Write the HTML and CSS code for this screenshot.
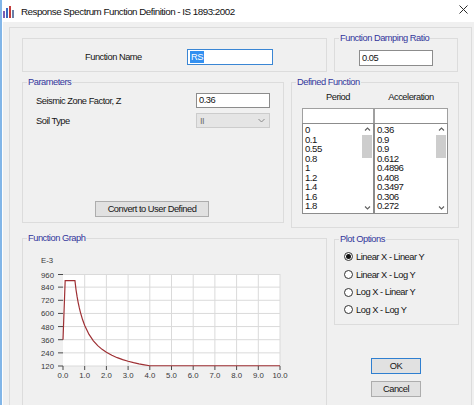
FILE: index.html
```html
<!DOCTYPE html>
<html>
<head>
<meta charset="utf-8">
<link rel="stylesheet" href="styles.css">
</head>
<body>
<div class="window">
  <div class="titlebar">
    <svg class="appicon" width="12" height="12" viewBox="0 0 12 12">
      <rect x="0" y="5" width="2" height="7" fill="#7b5db3"/>
      <rect x="3" y="2" width="2" height="10" fill="#3b68c0"/>
      <rect x="6" y="0" width="2" height="12" fill="#c23b3b"/>
      <rect x="9" y="4" width="2" height="8" fill="#6b7fa8"/>
    </svg>
    <span class="title">Response Spectrum Function Definition - IS 1893:2002</span>
    <svg class="close" width="9" height="9" viewBox="0 0 9 9">
      <path d="M0.5 0.5L8.5 8.5M8.5 0.5L0.5 8.5" stroke="#2b2b2b" stroke-width="1" fill="none"/>
    </svg>
  </div>
  <div class="client">
    <div class="frame">
      <div class="row row1">
        <div class="group g-name">
          <span class="name-label">Function Name</span>
          <div class="edit focus name-edit"><span class="sel">RS</span></div>
        </div>
        <div class="group g-damp">
          <span class="legend">Function Damping Ratio</span>
          <div class="edit damp-edit">0.05</div>
        </div>
      </div>
      <div class="row row2">
        <div class="group g-params">
          <span class="legend">Parameters</span>
          <div class="prow">
            <span class="plabel">Seismic Zone Factor, Z</span>
            <div class="edit pedit">0.36</div>
          </div>
          <div class="prow prow2">
            <span class="plabel">Soil Type</span>
            <div class="combo"><span>II</span>
              <svg width="7" height="5" viewBox="0 0 7 5"><path d="M0.5 1L3.5 4L6.5 1" stroke="#8a8a8a" fill="none"/></svg>
            </div>
          </div>
          <div class="btn convert">Convert to User Defined</div>
        </div>
        <div class="group g-def">
          <span class="legend">Defined Function</span>
          <div class="cols">
            <div class="col col1">
              <div class="colhead">Period</div>
              <div class="edit coledit"></div>
              <div class="list">
                <div class="items">
                  <div>0</div><div>0.1</div><div>0.55</div><div>0.8</div><div>1</div><div>1.2</div><div>1.4</div><div>1.6</div><div>1.8</div>
                </div>
                <div class="vscroll">
                  <svg class="arrow" width="11" height="11" viewBox="0 0 11 11"><path d="M3 6.5L5.5 4L8 6.5" stroke="#606060" stroke-width="1.1" fill="none"/></svg>
                  <div class="thumb"></div>
                  <svg class="arrow down" width="11" height="11" viewBox="0 0 11 11"><path d="M3 4.5L5.5 7L8 4.5" stroke="#606060" stroke-width="1.1" fill="none"/></svg>
                </div>
              </div>
            </div>
            <div class="col col2">
              <div class="colhead">Acceleration</div>
              <div class="edit coledit"></div>
              <div class="list">
                <div class="items">
                  <div>0.36</div><div>0.9</div><div>0.9</div><div>0.612</div><div>0.4896</div><div>0.408</div><div>0.3497</div><div>0.306</div><div>0.272</div>
                </div>
                <div class="vscroll">
                  <svg class="arrow" width="11" height="11" viewBox="0 0 11 11"><path d="M3 6.5L5.5 4L8 6.5" stroke="#606060" stroke-width="1.1" fill="none"/></svg>
                  <div class="thumb"></div>
                  <svg class="arrow down" width="11" height="11" viewBox="0 0 11 11"><path d="M3 4.5L5.5 7L8 4.5" stroke="#606060" stroke-width="1.1" fill="none"/></svg>
                </div>
              </div>
            </div>
          </div>
        </div>
      </div>
      <div class="row row3">
        <div class="group g-graph">
          <span class="legend">Function Graph</span>
          <svg class="graph" width="303" height="170" viewBox="0 0 303 170">
            <g transform="translate(-1,-1)">
              <rect x="41" y="36" width="217" height="92" fill="#ffffff"/>
              <g stroke="#dadada" stroke-width="1">
                <line x1="62.7" y1="36" x2="62.7" y2="128"/>
                <line x1="84.4" y1="36" x2="84.4" y2="128"/>
                <line x1="106.1" y1="36" x2="106.1" y2="128"/>
                <line x1="127.8" y1="36" x2="127.8" y2="128"/>
                <line x1="149.5" y1="36" x2="149.5" y2="128"/>
                <line x1="171.2" y1="36" x2="171.2" y2="128"/>
                <line x1="192.9" y1="36" x2="192.9" y2="128"/>
                <line x1="214.6" y1="36" x2="214.6" y2="128"/>
                <line x1="236.3" y1="36" x2="236.3" y2="128"/>
                <line x1="258" y1="36" x2="258" y2="128"/>
                <line x1="41" y1="36.5" x2="258" y2="36.5"/>
                <line x1="41" y1="49.14" x2="258" y2="49.14"/>
                <line x1="41" y1="62.29" x2="258" y2="62.29"/>
                <line x1="41" y1="75.43" x2="258" y2="75.43"/>
                <line x1="41" y1="88.57" x2="258" y2="88.57"/>
                <line x1="41" y1="101.71" x2="258" y2="101.71"/>
                <line x1="41" y1="114.86" x2="258" y2="114.86"/>
                <line x1="41" y1="128" x2="258" y2="128"/>
              </g>
              <g stroke="#4a4a4a" stroke-width="1">
                <line x1="36" y1="36.5" x2="41" y2="36.5"/>
                <line x1="36" y1="49.14" x2="41" y2="49.14"/>
                <line x1="36" y1="62.29" x2="41" y2="62.29"/>
                <line x1="36" y1="75.43" x2="41" y2="75.43"/>
                <line x1="36" y1="88.57" x2="41" y2="88.57"/>
                <line x1="36" y1="101.71" x2="41" y2="101.71"/>
                <line x1="36" y1="114.86" x2="41" y2="114.86"/>
                <line x1="36" y1="128" x2="41" y2="128"/>
                <line x1="41" y1="128" x2="41" y2="132"/>
                <line x1="62.7" y1="128" x2="62.7" y2="132"/>
                <line x1="84.4" y1="128" x2="84.4" y2="132"/>
                <line x1="106.1" y1="128" x2="106.1" y2="132"/>
                <line x1="127.8" y1="128" x2="127.8" y2="132"/>
                <line x1="149.5" y1="128" x2="149.5" y2="132"/>
                <line x1="171.2" y1="128" x2="171.2" y2="132"/>
                <line x1="192.9" y1="128" x2="192.9" y2="132"/>
                <line x1="214.6" y1="128" x2="214.6" y2="132"/>
                <line x1="236.3" y1="128" x2="236.3" y2="132"/>
                <line x1="258" y1="128" x2="258" y2="132"/>
              </g>
              <polyline fill="none" stroke="#9e2f33" stroke-width="1.2" points="41,101.7 43.17,42.57 52.94,42.57 54.02,51.77 55.1,58.65 56.19,64.54 57.28,69.65 58.36,74.12 60.53,81.56 62.7,87.52 67.04,96.46 71.38,102.84 75.72,107.63 80.06,111.35 84.4,114.33 89.83,117.3 95.25,119.69 100.68,121.63 106.1,123.27 111.53,124.63 116.95,125.82 122.38,126.83 127.8,127.74 258,127.74"/>
              <g class="ylab" text-anchor="end">
                <text x="32" y="39.5">960</text>
                <text x="32" y="52.1">840</text>
                <text x="32" y="65.3">720</text>
                <text x="32" y="78.4">600</text>
                <text x="32" y="91.6">480</text>
                <text x="32" y="104.7">360</text>
                <text x="32" y="117.9">240</text>
                <text x="32" y="131">120</text>
              </g>
              <text class="ylab" x="19" y="25">E-3</text>
              <g class="xlab" text-anchor="middle">
                <text x="41" y="140">0.0</text>
                <text x="62.7" y="140">1.0</text>
                <text x="84.4" y="140">2.0</text>
                <text x="106.1" y="140">3.0</text>
                <text x="127.8" y="140">4.0</text>
                <text x="149.5" y="140">5.0</text>
                <text x="171.2" y="140">6.0</text>
                <text x="192.9" y="140">7.0</text>
                <text x="214.6" y="140">8.0</text>
                <text x="236.3" y="140">9.0</text>
                <text x="258" y="140">10.0</text>
              </g>
            </g>
          </svg>
        </div>
        <div class="rightcol">
          <div class="group g-plot">
            <span class="legend">Plot Options</span>
            <div class="radio"><span class="circle checked"></span><span>Linear X - Linear Y</span></div>
            <div class="radio"><span class="circle"></span><span>Linear X - Log Y</span></div>
            <div class="radio"><span class="circle"></span><span>Log X - Linear Y</span></div>
            <div class="radio"><span class="circle"></span><span>Log X - Log Y</span></div>
          </div>
          <div class="btn ok">OK</div>
          <div class="btn cancel">Cancel</div>
        </div>
      </div>
    </div>
  </div>
</div>
</body>
</html>
```

FILE: styles.css
```css
* { box-sizing: border-box; }
html, body { margin: 0; padding: 0; background: #f0f0f0; }
body {
  font-family: "Liberation Sans", Arial, sans-serif;
  font-size: 9.3px;
  letter-spacing: -0.48px;
  color: #151515;
}
.window {
  width: 474px;
  height: 405px;
  overflow: hidden;
  border-left: 2px solid #82b6e8;
  background: #f0f0f0;
}
.titlebar {
  height: 22px;
  background: #ffffff;
  display: flex;
  align-items: center;
  padding-left: 1px;
  padding-right: 6px;
}
.appicon { display: block; margin-top: 1px; }
.title {
  margin-left: 6px;
  font-size: 9.8px;
  letter-spacing: -0.5px;
  color: #111;
}
.close { margin-left: auto; margin-top: -4px; display: block; }
.client {
  padding: 5px 0 0 6px;
  border-left: 1px solid #ffffff;
}
.frame {
  width: 463px;
  height: 400px;
  border: 1px solid #dcdcdc;
  padding: 10px 0 0 12px;
}
.row { display: flex; align-items: flex-start; gap: 7px; }
.row2, .row3 { margin-top: 10px; }
.group {
  position: relative;
  border: 1px solid #dcdcdc;
}
.legend {
  position: absolute;
  top: -7px;
  left: 4px;
  padding: 0 1px;
  line-height: 12px;
  background: #f0f0f0;
  color: #33369c;
  white-space: nowrap;
}
.edit {
  background: #ffffff;
  border: 1px solid #8c8c8c;
  height: 16px;
  line-height: 14px;
  padding-left: 2px;
  white-space: nowrap;
}
.edit.focus { border-color: #3a86d4; }
.sel {
  display: inline-block;
  background: #3390f0;
  color: #ffffff;
  line-height: 12px;
  padding: 0 1px;
  margin-top: 1px;
  vertical-align: top;
}
.g-name {
  width: 305px;
  height: 34px;
  display: flex;
  align-items: flex-start;
  padding: 10px 0 0 62px;
}
.name-label { width: 102px; line-height: 16px; }
.name-edit { width: 86px; }
.g-damp {
  width: 124px;
  height: 34px;
  padding: 11px 0 0 24px;
}
.damp-edit { width: 74px; }
.g-params {
  width: 262px;
  height: 141px;
  display: flex;
  flex-direction: column;
  padding: 10px 0 5px 13px;
}
.prow { display: flex; align-items: center; height: 15px; }
.prow2 { margin-top: 5px; }
.plabel { width: 160px; }
.pedit { width: 74px; height: 15px; line-height: 13px; }
.combo {
  width: 74px;
  height: 15px;
  background: #e5e5e5;
  border: 1px solid #cccccc;
  color: #707070;
  display: flex;
  align-items: center;
  justify-content: space-between;
  padding: 0 4px 0 3px;
}
.combo svg { display: block; }
.btn {
  background: #e1e1e1;
  border: 1px solid #adadad;
  height: 16px;
  line-height: 14px;
  text-align: center;
}
.convert {
  width: 114px;
  margin-top: auto;
  margin-left: 59px;
}
.g-def {
  width: 168px;
  height: 146px;
  padding-left: 10px;
}
.cols { display: flex; }
.col1 { width: 72px; }
.col2 { width: 74px; }
.colhead {
  height: 25px;
  padding-top: 9px;
  line-height: 10px;
  text-align: center;
}
.coledit { height: 16px; border-color: #a0a0a0; }
.list {
  margin-top: -1px;
  height: 91px;
  background: #ffffff;
  border: 1px solid #8c8c8c;
  display: flex;
}
.items {
  flex: 1;
  padding: 1px 0 0 2px;
  line-height: 9.5px;
  font-size: 9.6px;
  overflow: hidden;
}
.vscroll {
  width: 12px;
  display: flex;
  flex-direction: column;
  align-items: center;
  background: #ffffff;
}
.arrow { display: block; flex: none; }
.arrow.down { margin-top: auto; }
.thumb {
  width: 10px;
  height: 23px;
  background: #cdcdcd;
}
.g-graph {
  width: 305px;
  height: 180px;
}
.graph { display: block; }
.ylab, .xlab {
  font-family: "Liberation Sans", Arial, sans-serif;
  font-size: 7.8px;
  letter-spacing: 0;
  fill: #3a3a3a;
}
.rightcol {
  width: 125px;
  padding-top: 1px;
  display: flex;
  flex-direction: column;
}
.g-plot {
  width: 125px;
  height: 86px;
  padding: 8px 0 0 9px;
}
.radio {
  display: flex;
  align-items: center;
  height: 17.7px;
  gap: 3px;
}
.circle {
  width: 9px;
  height: 9px;
  border: 1px solid #333333;
  border-radius: 50%;
  background: #ffffff;
  display: flex;
  align-items: center;
  justify-content: center;
}
.circle.checked::after {
  content: "";
  width: 5px;
  height: 5px;
  border-radius: 50%;
  background: #111111;
}
.ok {
  width: 50px;
  margin-top: 33px;
  margin-left: 37px;
  border-color: #2f7fd0;
}
.cancel {
  width: 50px;
  margin-top: 7px;
  margin-left: 37px;
}
```
